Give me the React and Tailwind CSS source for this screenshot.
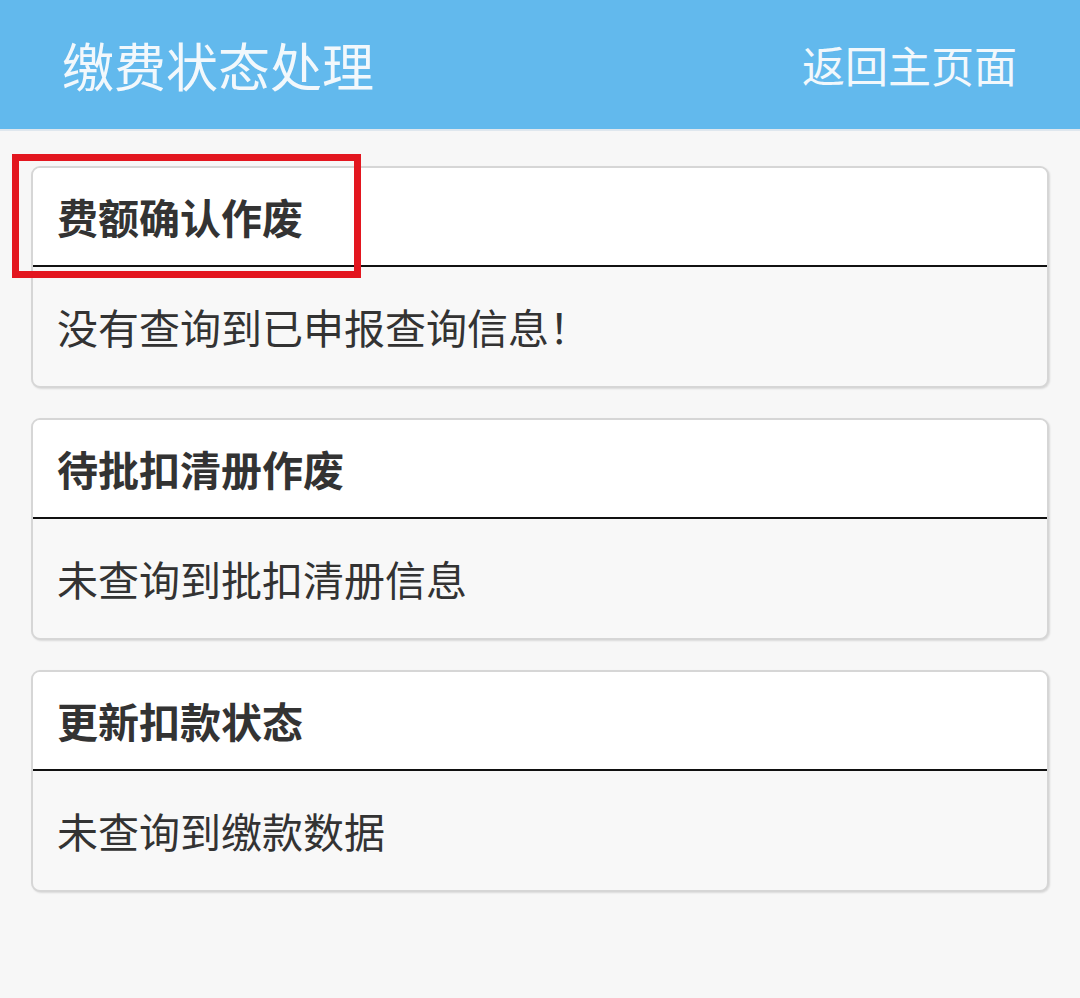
import React from 'react'

const cards = [
  { title: '费额确认作废', body: '没有查询到已申报查询信息！', marked: true },
  { title: '待批扣清册作废', body: '未查询到批扣清册信息' },
  { title: '更新扣款状态', body: '未查询到缴款数据' },
]

function Card({ title, body, marked }) {
  return (
    <div className="relative">
      <div className="rounded-[9px] border-2 border-[#d6d6d6] bg-[#f8f8f8] overflow-hidden shadow-[1px_1px_2px_rgba(0,0,0,0.12)]">
        <div className="h-[99px] bg-white flex items-center px-[24px] border-b-2 border-[#111]">
          <span className="text-[41px] leading-none font-bold text-[#333]">{title}</span>
        </div>
        <div className="h-[119px] flex items-center px-[24px]">
          <span className="text-[41px] leading-none text-[#333]">{body}</span>
        </div>
      </div>
      {marked && (
        <div className="absolute left-[-19px] top-[-12px] w-[349px] h-[124px] border-[7px] border-[#e3161f]" />
      )}
    </div>
  )
}

export default function App() {
  return (
    <div
      className="w-[1080px] h-[998px] bg-[#f7f7f7] overflow-hidden"
      style={{ fontFamily: '"Noto Sans CJK SC", "Noto Sans", sans-serif' }}
    >
      <div className="h-[131px] bg-[#62b9ed] border-b-2 border-[#dfe7ee] flex items-center justify-between pl-[62px] pr-[63px]">
        <span className="text-[52px] leading-none text-[#f2f8fc]">缴费状态处理</span>
        <span className="text-[43px] leading-none text-[#f2f8fc]">返回主页面</span>
      </div>
      <div className="flex flex-col gap-[30px] pl-[31px] pr-[31px] pt-[35px]">
        {cards.map((c) => (
          <Card key={c.title} {...c} />
        ))}
      </div>
    </div>
  )
}
